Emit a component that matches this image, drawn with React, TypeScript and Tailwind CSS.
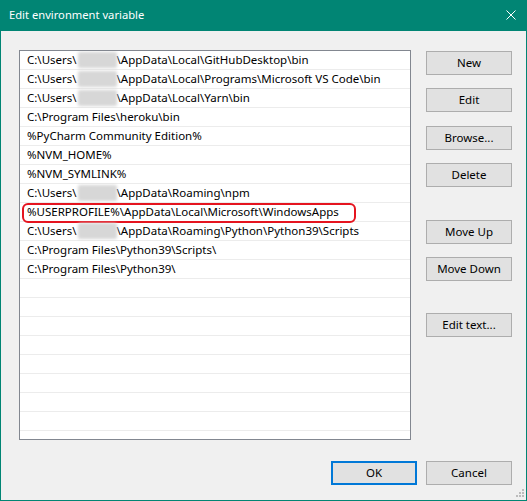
import React from "react";

const font = { fontFamily: '"Segoe UI", "Noto Sans", "Liberation Sans", sans-serif' };

type Row = { parts: (string | null)[]; marked?: boolean };

// null marks where the username is blurred out
const rows: Row[] = [
  { parts: ["C:\\Users\\", null, "\\AppData\\Local\\GitHubDesktop\\bin"] },
  { parts: ["C:\\Users\\", null, "\\AppData\\Local\\Programs\\Microsoft VS Code\\bin"] },
  { parts: ["C:\\Users\\", null, "\\AppData\\Local\\Yarn\\bin"] },
  { parts: ["C:\\Program Files\\heroku\\bin"] },
  { parts: ["%PyCharm Community Edition%"] },
  { parts: ["%NVM_HOME%"] },
  { parts: ["%NVM_SYMLINK%"] },
  { parts: ["C:\\Users\\", null, "\\AppData\\Roaming\\npm"] },
  { parts: ["%USERPROFILE%\\AppData\\Local\\Microsoft\\WindowsApps"], marked: true },
  { parts: ["C:\\Users\\", null, "\\AppData\\Roaming\\Python\\Python39\\Scripts"] },
  { parts: ["C:\\Program Files\\Python39\\Scripts\\"] },
  { parts: ["C:\\Program Files\\Python39\\"] },
];

const emptyRows = Array.from({ length: 9 });

function SideButton({ label, className = "" }: { label: string; className?: string }) {
  return (
    <button
      className={`h-[24px] w-[86px] border border-[#adadad] bg-[#e1e1e1] text-[11.5px] text-black ${className}`}
    >
      {label}
    </button>
  );
}

export default function App() {
  return (
    <div
      className="flex h-[501px] w-[527px] flex-col bg-[#018574] px-[1px] pb-[1px]"
      style={font}
    >
      {/* title bar */}
      <div className="flex h-[31px] items-center justify-between pl-[8px] pr-[10px] text-[11.2px] text-white">
        <span>Edit environment variable</span>
        <svg width="10" height="10" viewBox="0 0 10 10" className="mt-[-1px]">
          <path d="M0.5 0.5 L9.5 9.5 M9.5 0.5 L0.5 9.5" stroke="white" strokeWidth="1" />
        </svg>
      </div>

      <div className="relative flex flex-1 flex-col bg-[#f0f0f0] pl-[18px] pr-[14px] pt-[19px]">
        <div className="flex">
          {/* path list */}
          <div className="h-[390px] w-[392px] overflow-hidden border border-[#828790] bg-white">
            {rows.map((r, i) => (
              <div
                key={i}
                className="relative flex h-[19px] items-center whitespace-nowrap border-b border-[#ececec] pl-[7px] text-[11.5px] text-black"
              >
                {r.parts.map((p, j) =>
                  p === null ? (
                    <span
                      key={j}
                      className="ml-[1px] inline-block h-[16px] w-[39px] rounded-[2px] bg-[#d7d7d7] blur-[1.5px]"
                    />
                  ) : (
                    <span key={j}>{p}</span>
                  )
                )}
                {r.marked && (
                  <span className="absolute left-[2px] top-0 h-[20px] w-[334px] rounded-[6px] border-2 border-[#e5141f]" />
                )}
              </div>
            ))}
            {emptyRows.map((_, i) => (
              <div key={i} className="h-[19px] border-b border-[#ececec]" />
            ))}
          </div>

          {/* action buttons */}
          <div className="ml-[15px] flex flex-col">
            <SideButton label="New" className="mt-[1px]" />
            <SideButton label="Edit" className="mt-[13px]" />
            <SideButton label="Browse..." className="mt-[14px]" />
            <SideButton label="Delete" className="mt-[13px]" />
            <SideButton label="Move Up" className="mt-[33px]" />
            <SideButton label="Move Down" className="mt-[13px]" />
            <SideButton label="Edit text..." className="mt-[32px]" />
          </div>
        </div>

        <div className="mt-[21px] flex justify-end gap-[9px]">
          <button className="h-[24px] w-[86px] border-2 border-[#0078d7] bg-[#e1e1e1] text-[11.5px] text-black">
            OK
          </button>
          <button className="h-[24px] w-[86px] border border-[#adadad] bg-[#e1e1e1] text-[11.5px] text-black">
            Cancel
          </button>
        </div>

        {/* resize grip */}
        <svg width="8" height="8" viewBox="0 0 8 8" className="absolute bottom-[3px] right-[2px]">
          <rect x="6" y="0" width="2" height="2" fill="#bcbcbc" />
          <rect x="3" y="3" width="2" height="2" fill="#bcbcbc" />
          <rect x="6" y="3" width="2" height="2" fill="#bcbcbc" />
          <rect x="0" y="6" width="2" height="2" fill="#bcbcbc" />
          <rect x="3" y="6" width="2" height="2" fill="#bcbcbc" />
          <rect x="6" y="6" width="2" height="2" fill="#bcbcbc" />
        </svg>
      </div>
    </div>
  );
}
